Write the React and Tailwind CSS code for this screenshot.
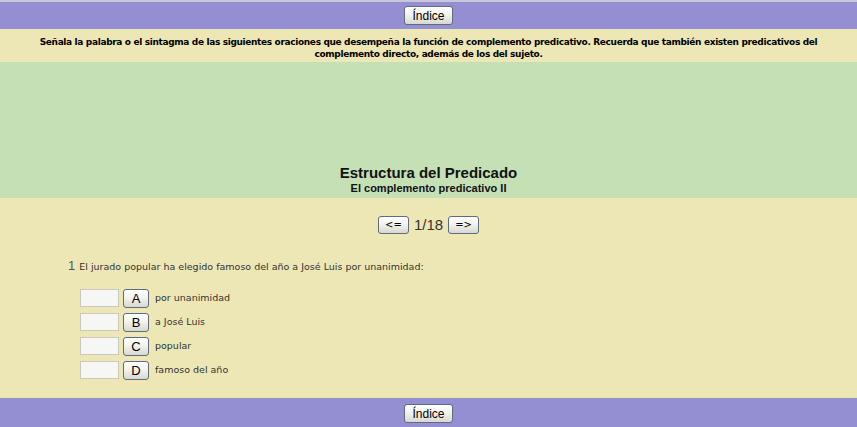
import React from "react";

const xpButton =
  "rounded-[3px] border border-[#5f6b7e] bg-gradient-to-b from-[#ffffff] via-[#f1f1ec] to-[#d8d8d0] text-black leading-none flex items-center justify-center";

const options = [
  { letter: "A", text: "por unanimidad" },
  { letter: "B", text: "a José Luis", active: true },
  { letter: "C", text: "popular" },
  { letter: "D", text: "famoso del año" },
];

const IndexBar = ({ top }) => (
  <div
    className={`h-[29px] bg-[#948fd2] flex items-center justify-center ${
      top ? "border-t-2 border-[#c9c7d9]" : "pt-[2px]"
    }`}
  >
    <button className={`${xpButton} w-[49px] h-[19px] text-[12px] font-['Liberation_Sans',sans-serif]`}>
      Índice
    </button>
  </div>
);

const App = () => {
  return (
    <div className="w-full h-[427px] flex flex-col overflow-hidden font-['DejaVu_Sans','Liberation_Sans',sans-serif]">
      <IndexBar top />

      <div className="h-[33px] bg-[#ede7b6] pt-[7px] text-center text-[9px] tracking-[-0.35px] leading-[12px] font-bold text-black px-[36px]">
        Señala la palabra o el sintagma de las siguientes oraciones que desempeña la función de complemento predicativo. Recuerda que también existen predicativos del complemento directo, además de los del sujeto.
      </div>

      <div className="h-[136px] bg-[#c6e0b5] flex flex-col items-center justify-end pb-[4px] font-['Liberation_Sans',sans-serif] text-[#111]">
        <p className="text-[15px] leading-[18px] font-bold">Estructura del Predicado</p>
        <p className="text-[11px] leading-[12px] font-bold">El complemento predicativo II</p>
      </div>

      <div className="flex-1 bg-[#ede7b6] pt-[16px]">
        <div className="flex items-center justify-center gap-[5px]">
          <button className={`${xpButton} w-[31px] h-[18px] text-[10px]`}>&lt;=</button>
          <span className="text-[15px] text-[#333] font-['Liberation_Sans',sans-serif]">1/18</span>
          <button className={`${xpButton} w-[31px] h-[18px] text-[10px]`}>=&gt;</button>
        </div>

        <div className="mt-[19px] pl-[68px] flex items-baseline gap-[4px] text-[#333]">
          <span className="text-[13px] font-['Liberation_Sans',sans-serif] text-[#555]">1</span>
          <span className="text-[9.5px]">
            El jurado popular ha elegido famoso del año a José Luis por unanimidad:
          </span>
        </div>

        <div className="mt-[14px] pl-[80px] flex flex-col gap-[6px]">
          {options.map((o) => (
            <div key={o.letter} className="flex items-center h-[18px]">
              <div className="w-[39px] h-[18px] bg-[#f6f6f4] border border-[#c8c8c0]" />
              <button
                className={`${xpButton} ml-[4px] w-[26px] h-[19px] text-[13px] font-['Liberation_Sans',sans-serif] ${
                  o.active ? "text-[#5a1838]" : ""
                }`}
              >
                {o.letter}
              </button>
              <span className="ml-[6px] text-[9.5px] text-[#333]">{o.text}</span>
            </div>
          ))}
        </div>
      </div>

      <IndexBar />
    </div>
  );
};

export default App;
